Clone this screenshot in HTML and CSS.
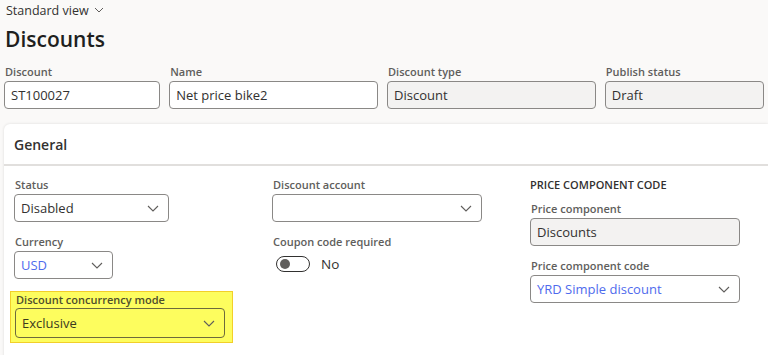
FILE: index.html
```html
<!DOCTYPE html>
<html lang="en">
<head>
  <meta charset="UTF-8" />
  <title>Discounts</title>
  <link rel="stylesheet" href="styles.css">
</head>
<body>
  <div class="view-picker">Standard view
    <svg class="chev" width="10" height="6" viewBox="0 0 10 6"><path d="M1 1l4 4 4-4" fill="none" stroke="#605e5c" stroke-width="1"/></svg>
  </div>
  <h1 class="title">Discounts</h1>

  <div class="header-fields">
    <div class="field w-id">
      <label>Discount</label>
      <div class="box">ST100027</div>
    </div>
    <div class="field w-name">
      <label>Name</label>
      <div class="box">Net price bike2</div>
    </div>
    <div class="field w-name">
      <label>Discount type</label>
      <div class="box readonly">Discount</div>
    </div>
    <div class="field w-status">
      <label>Publish status</label>
      <div class="box readonly">Draft</div>
    </div>
  </div>

  <div class="card">
    <div class="card-head">General</div>
    <div class="card-body">
      <div class="col">
        <div class="field">
          <label>Status</label>
          <div class="box select w-status-sel">Disabled
            <svg class="chev" width="12" height="7" viewBox="0 0 12 7"><path d="M1 1l5 5 5-5" fill="none" stroke="#605e5c" stroke-width="1.1"/></svg>
          </div>
        </div>
        <div class="field">
          <label>Currency</label>
          <div class="box select w-currency link">USD
            <svg class="chev" width="12" height="7" viewBox="0 0 12 7"><path d="M1 1l5 5 5-5" fill="none" stroke="#605e5c" stroke-width="1.1"/></svg>
          </div>
        </div>
        <div class="field highlight">
          <label>Discount concurrency mode</label>
          <div class="box select w-mode">Exclusive
            <svg class="chev" width="12" height="7" viewBox="0 0 12 7"><path d="M1 1l5 5 5-5" fill="none" stroke="#605e5c" stroke-width="1.1"/></svg>
          </div>
        </div>
      </div>

      <div class="col">
        <div class="field">
          <label>Discount account</label>
          <div class="box select w-wide">
            <span></span>
            <svg class="chev" width="12" height="7" viewBox="0 0 12 7"><path d="M1 1l5 5 5-5" fill="none" stroke="#605e5c" stroke-width="1.1"/></svg>
          </div>
        </div>
        <div class="field">
          <label>Coupon code required</label>
          <div class="toggle-row">
            <span class="toggle"><span class="knob"></span></span>
            <span class="toggle-text">No</span>
          </div>
        </div>
      </div>

      <div class="col">
        <div class="group-title">PRICE COMPONENT CODE</div>
        <div class="field">
          <label>Price component</label>
          <div class="box readonly w-wide">Discounts</div>
        </div>
        <div class="field">
          <label>Price component code</label>
          <div class="box select w-wide link">YRD Simple discount
            <svg class="chev" width="12" height="7" viewBox="0 0 12 7"><path d="M1 1l5 5 5-5" fill="none" stroke="#605e5c" stroke-width="1.1"/></svg>
          </div>
        </div>
      </div>
    </div>
  </div>
</body>
</html>
```

FILE: styles.css
```css
* {
  box-sizing: border-box;
}
body {
  margin: 0;
  background: #faf9f8;
  font-family: 'Open Sans', sans-serif;
  color: #323130;
  overflow: hidden;
}
.view-picker {
  display: flex;
  align-items: center;
  gap: 5px;
  padding: 2px 6px 0;
  height: 18px;
  font-size: 12.5px;
  color: #323130;
}
.title {
  margin: 5px 0 0 5px;
  font-size: 21px;
  font-weight: 600;
  line-height: 32px;
  color: #201f1e;
}
.header-fields {
  display: flex;
  gap: 9px;
  padding: 9px 4px 0;
}
.field label {
  display: block;
  font-size: 11px;
  font-weight: 600;
  line-height: 15px;
  color: #605e5c;
  margin-bottom: 2px;
  padding-left: 1px;
}
.box {
  display: flex;
  align-items: center;
  justify-content: space-between;
  height: 28px;
  padding: 0 9px 0 6px;
  border: 1px solid #8a8886;
  border-radius: 4px;
  background: white;
  font-size: 13px;
  color: #323130;
}
.box.readonly {
  background: #f3f2f1;
}
.w-id { width: 157px; }
.w-name { width: 210px; }
.w-status { width: 160px; }
.w-status-sel { width: 155px; }
.w-currency { width: 99px; }
.w-mode { width: 210px; }
.w-wide { width: 210px; }
.link {
  color: #4f6bed;
}
.card {
  margin: 15px 0 0 4px;
  background: white;
  border-radius: 6px 0 0 0;
  box-shadow: 0 0 3px rgba(0,0,0,0.12);
  height: 240px;
}
.card-head {
  height: 42px;
  display: flex;
  align-items: center;
  padding-left: 10px;
  font-size: 14px;
  font-weight: 600;
  border-bottom: 2px solid #e1dfdd;
}
.card-body {
  display: grid;
  grid-template-columns: 258px 258px auto;
  padding: 11px 0 0 10px;
}
.col {
  display: flex;
  flex-direction: column;
  gap: 12px;
}
.highlight {
  margin: 0 0 0 -4px;
  width: 223px;
  padding: 0 0 4px 4px;
  background: #fdfd5e;
  border: 1px solid #f2cf2a;
}
.highlight label {
  color: #4e4d2c;
  margin-bottom: 1px;
}
.highlight .box {
  height: 30px;
  background: #fdfd5e;
  border-color: #6d6a3c;
  color: #3b3a1e;
}
.toggle-row {
  display: flex;
  align-items: center;
  gap: 11px;
  padding: 4px 0 0 4px;
}
.toggle {
  display: flex;
  align-items: center;
  width: 34px;
  height: 16px;
  border: 1px solid #323130;
  border-radius: 8px;
  padding-left: 3px;
}
.knob {
  width: 10px;
  height: 10px;
  border-radius: 50%;
  background: #605e5c;
}
.toggle-text {
  font-size: 13.5px;
}
.group-title {
  font-size: 11px;
  font-weight: 600;
  line-height: 15px;
  color: #323130;
  margin-bottom: -3px;
}
```
